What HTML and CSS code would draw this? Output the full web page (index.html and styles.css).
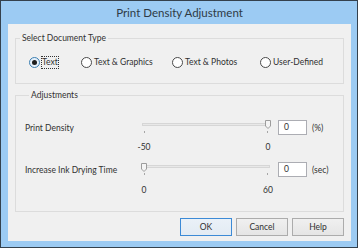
FILE: index.html
```html
<!DOCTYPE html>
<html>
<head>
<meta charset="utf-8">
<link rel="stylesheet" href="styles.css">
</head>
<body>
<div class="window">
  <div class="titlebar">Print Density Adjustment</div>
  <div class="client">
    <fieldset class="group group-doc">
      <legend>Select Document Type</legend>
      <div class="radios">
        <div class="radio-item"><span class="radio checked"></span><span class="rlabel focus">Text</span></div>
        <div class="radio-item"><span class="radio"></span><span class="rlabel">Text &amp; Graphics</span></div>
        <div class="radio-item"><span class="radio"></span><span class="rlabel">Text &amp; Photos</span></div>
        <div class="radio-item"><span class="radio"></span><span class="rlabel">User-Defined</span></div>
      </div>
    </fieldset>
    <fieldset class="group group-adj">
      <legend>Adjustments</legend>
      <div class="adj-row first">
        <div class="adj-label">Print Density</div>
        <div class="slider">
          <div class="track"></div>
          <span class="tick tick-l"></span><span class="tick tick-r"></span>
          <svg class="thumb thumb-r" width="6" height="9" viewBox="0 0 6 9"><polygon points="0.5,0.5 5.5,0.5 5.5,6 3,8.5 0.5,6" fill="#f4f4f4" stroke="#9c9c9c" stroke-width="1"/></svg>
        </div>
        <div class="num">0</div>
        <div class="unit">(%)</div>
      </div>
      <div class="scale"><span>-50</span><span>0</span></div>
      <div class="adj-row second">
        <div class="adj-label">Increase Ink Drying Time</div>
        <div class="slider">
          <div class="track"></div>
          <span class="tick tick-l"></span><span class="tick tick-r"></span>
          <svg class="thumb thumb-l" width="6" height="9" viewBox="0 0 6 9"><polygon points="0.5,0.5 5.5,0.5 5.5,6 3,8.5 0.5,6" fill="#f4f4f4" stroke="#9c9c9c" stroke-width="1"/></svg>
        </div>
        <div class="num">0</div>
        <div class="unit">(sec)</div>
      </div>
      <div class="scale"><span>0</span><span>60</span></div>
    </fieldset>
    <div class="buttons">
      <div class="btn default">OK</div>
      <div class="btn">Cancel</div>
      <div class="btn">Help</div>
    </div>
  </div>
</div>
</body>
</html>
```
FILE: styles.css
```css
html, body {
  margin: 0;
  padding: 0;
  background: #9ccbf3;
}
body {
  font-family: Lato, "Noto Sans", sans-serif;
  font-size: 8.5px;
  color: #303030;
}
.window {
  width: 358px;
  height: 248px;
  box-sizing: border-box;
  border: 1px solid #34414d;
  background: #9ccbf3;
  display: flex;
  flex-direction: column;
  padding: 0 6px 6px 7px;
}
.titlebar {
  height: 23px;
  display: flex;
  align-items: center;
  justify-content: center;
  font-size: 11.5px;
  color: #2e3a45;
}
.client {
  flex: 1;
  background: #f0f0f0;
  padding: 8px 7px 5px 7px;
  display: flex;
  flex-direction: column;
}
.group {
  margin: 0;
  padding: 0;
  border: 1px solid #dcdcdc;
  min-inline-size: 0;
}
.group legend {
  margin-left: 4px;
  padding: 0 2px;
  line-height: 12px;
  height: 12px;
}
.radios {
  display: grid;
  grid-template-columns: 52px 91px 88px 1fr;
  padding: 12px 0 15px 13px;
  height: 12px;
  align-items: center;
}
.radio-item {
  display: flex;
  align-items: center;
  height: 12px;
}
.radio {
  width: 9px;
  height: 9px;
  border: 1px solid #4a4a4a;
  border-radius: 50%;
  background: #fff;
  margin-right: 1px;
  display: flex;
  align-items: center;
  justify-content: center;
  flex: none;
}
.radio.checked {
  border-color: #3c7fb1;
  background: #e6f0fa;
}
.radio.checked::after {
  content: "";
  width: 5px;
  height: 5px;
  border-radius: 50%;
  background: #1c1c1c;
}
.rlabel {
  line-height: 11px;
  padding: 0;
  border: 1px solid transparent;
}
.rlabel.focus {
  border: 1px dotted #333;
}
.group-adj {
  margin-top: 5px;
  padding: 19px 0 15px 9px;
}
.adj-row {
  display: flex;
  align-items: center;
  height: 15px;
}
.adj-row.second {
  margin-top: 9px;
}
.adj-label {
  width: 111px;
}
.slider {
  position: relative;
  width: 140px;
  height: 15px;
}
.track {
  margin: 3px 6px 0 6px;
  height: 1px;
  border: 1px solid #d6d6d6;
  background: #e8e8e8;
}
.tick {
  position: absolute;
  top: 11px;
  width: 1px;
  height: 2px;
  background: #a6a6a6;
}
.tick-l { left: 8px; }
.tick-r { left: 131px; }
.thumb {
  position: absolute;
  top: 0;
}
.thumb-l { left: 5px; top: 1px; }
.thumb-r { left: 129px; }
.num {
  margin-left: 2px;
  width: 29px;
  height: 15px;
  box-sizing: border-box;
  border: 1px solid #acadb3;
  background: #fff;
  padding-left: 5px;
  line-height: 13px;
}
.unit {
  margin-left: 5px;
}
.scale {
  display: flex;
  justify-content: space-between;
  width: 140px;
  margin-left: 111px;
  margin-top: 6px;
  height: 12px;
  line-height: 12px;
}
.scale span {
  width: 16px;
  text-align: center;
}
.scale:last-child {
  margin-top: 7px;
}
.buttons {
  display: flex;
  justify-content: flex-end;
  gap: 4px;
  margin-top: 6px;
}
.btn {
  width: 52px;
  height: 18px;
  box-sizing: border-box;
  border: 1px solid #acacac;
  background: linear-gradient(#f0f0f0, #e5e5e5);
  display: flex;
  align-items: center;
  justify-content: center;
}
.btn.default {
  border-color: #3c8ad6;
  background: linear-gradient(#eaf1f8, #e3ebf3);
}
```
